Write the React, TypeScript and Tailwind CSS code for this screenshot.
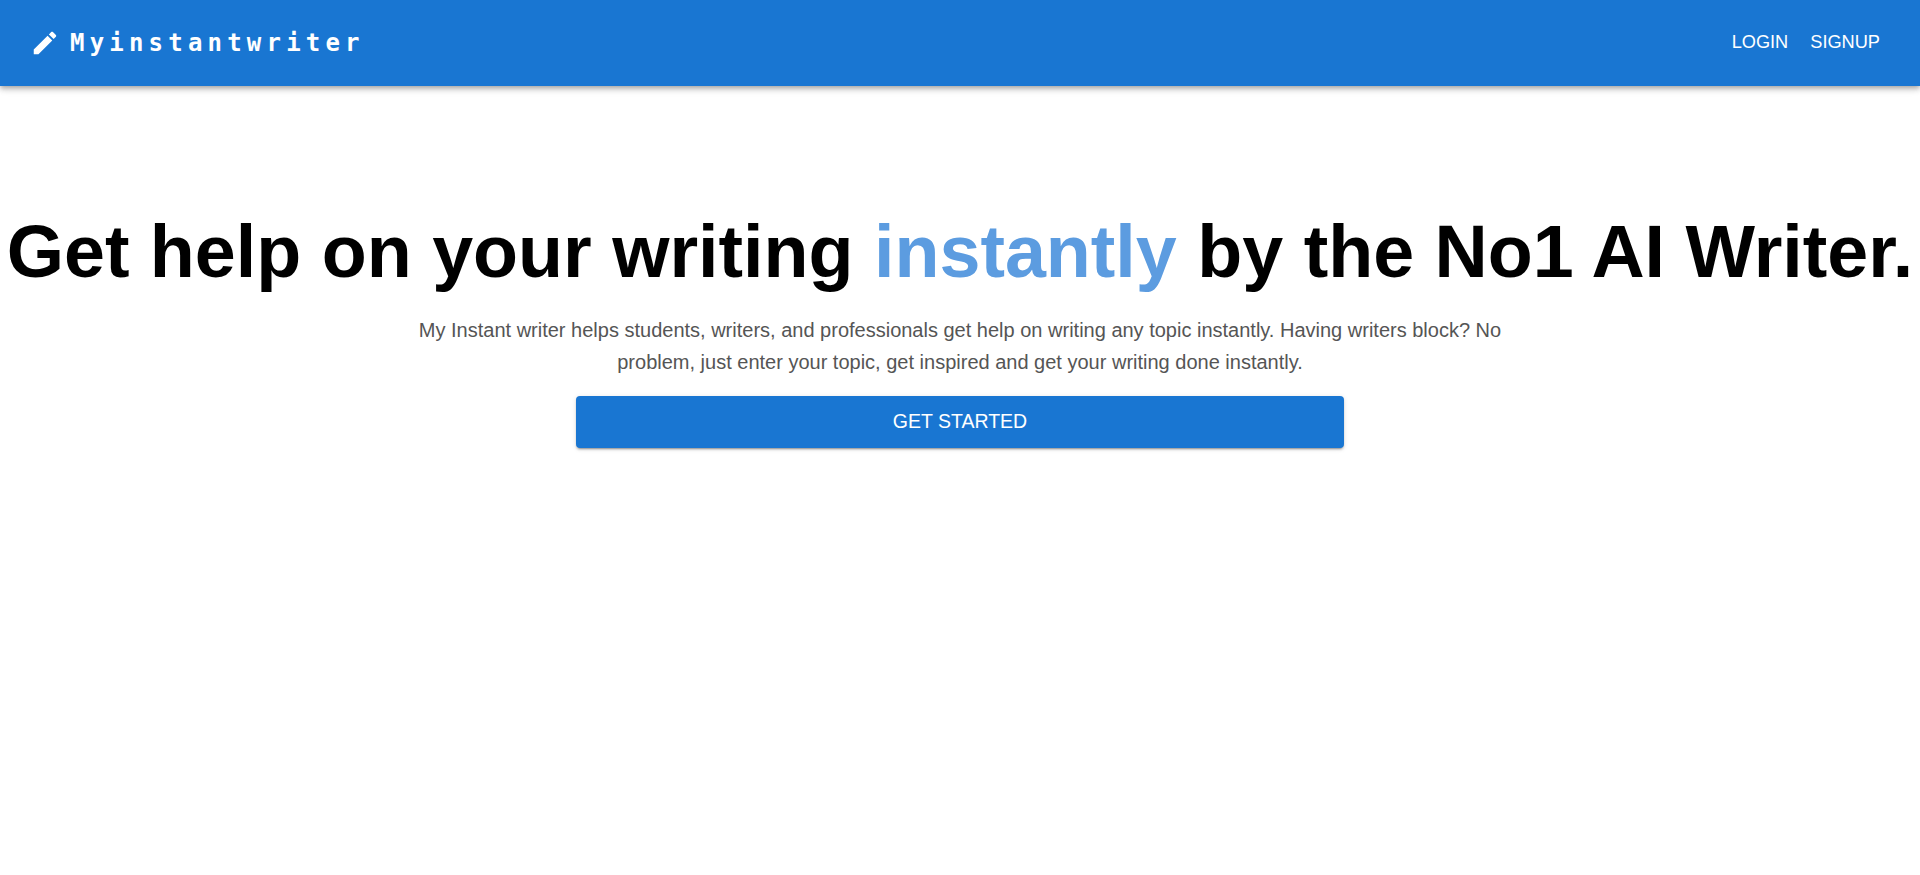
function EditIcon() {
  return (
    <svg viewBox="0 0 24 24" className="w-[30px] h-[30px] fill-white shrink-0">
      <path d="M3 17.25V21h3.75L17.81 9.94l-3.75-3.75L3 17.25zM20.71 7.04c.39-.39.39-1.02 0-1.41l-2.34-2.34c-.39-.39-1.02-.39-1.41 0l-1.83 1.83 3.75 3.75 1.83-1.83z" />
    </svg>
  )
}

export default function App() {
  return (
    <div className="min-h-[875px] bg-white font-['Liberation_Sans',Arial,sans-serif]">
      {/* App bar */}
      <header className="h-[86px] bg-[#1976d2] text-white flex items-center justify-between pl-[30px] pr-[40px] shadow-[0_2px_4px_-1px_rgba(0,0,0,0.2),0_4px_5px_0_rgba(0,0,0,0.14),0_1px_10px_0_rgba(0,0,0,0.12)]">
        <div className="flex items-center gap-[10px]">
          <EditIcon />
          <span className="font-['DejaVu_Sans_Mono',monospace] font-bold text-[24px] tracking-[5.2px]">
            Myinstantwriter
          </span>
        </div>
        <nav className="flex items-center gap-[22px] text-[18.2px]">
          <a>LOGIN</a>
          <a>SIGNUP</a>
        </nav>
      </header>

      {/* Hero */}
      <main className="flex flex-col items-center pt-[122px]">
        <h1 className="text-[73.65px] leading-[88px] font-bold text-black whitespace-nowrap">
          Get help on your writing <span className="text-[#5c9ce0]">instantly</span> by the No1 AI Writer.
        </h1>
        <p className="mt-[18px] w-[1100px] text-center text-[20px] leading-[32px] text-[#555555]">
          My Instant writer helps students, writers, and professionals get help on writing any topic instantly. Having writers block? No problem, just enter your topic, get inspired and get your writing done instantly.
        </p>
        <button className="mt-[18px] w-[768px] h-[52px] rounded-[4px] bg-[#1976d2] text-white text-[19.5px] shadow-[0_3px_1px_-2px_rgba(0,0,0,0.2),0_2px_2px_0_rgba(0,0,0,0.14),0_1px_5px_0_rgba(0,0,0,0.12)]">
          GET STARTED
        </button>
      </main>
    </div>
  )
}
